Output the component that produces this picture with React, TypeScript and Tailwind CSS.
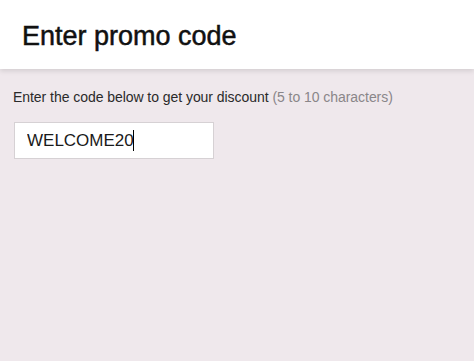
import { useState } from "react";

export default function App() {
  const [code, setCode] = useState("WELCOME20");

  return (
    <div className="flex h-[361px] w-[474px] flex-col bg-[#efe8ec] font-['Liberation_Sans',Arial,sans-serif]">
      <header className="relative z-10 flex h-[69px] items-center bg-white px-[22px] shadow-[0_2px_5px_rgba(0,0,0,0.12)]">
        <h1 className="pt-[3px] text-[27px] text-[#111] [-webkit-text-stroke:0.5px_#111]">Enter promo code</h1>
      </header>

      <main className="flex flex-col px-[13px] pt-[18px]">
        <p className="text-[14px] tracking-[-0.05px] text-[#2a2a2a]">
          Enter the code below to get your discount{" "}
          <span className="text-[#8a8689]">(5 to 10 characters)</span>
        </p>
        <div className="relative mt-[14px] ml-px w-[200px]">
          <input
            value={code}
            onChange={(e) => setCode(e.target.value)}
            className="h-[37px] w-full border border-[#d6d1d4] bg-white px-[12px] text-[17px] text-[#1a1a1a] caret-black outline-none"
          />
          {/* blinking caret as captured in the screenshot */}
          <span className="pointer-events-none absolute top-[8px] left-[119px] h-[21px] w-px bg-black" />
        </div>
      </main>
    </div>
  );
}
